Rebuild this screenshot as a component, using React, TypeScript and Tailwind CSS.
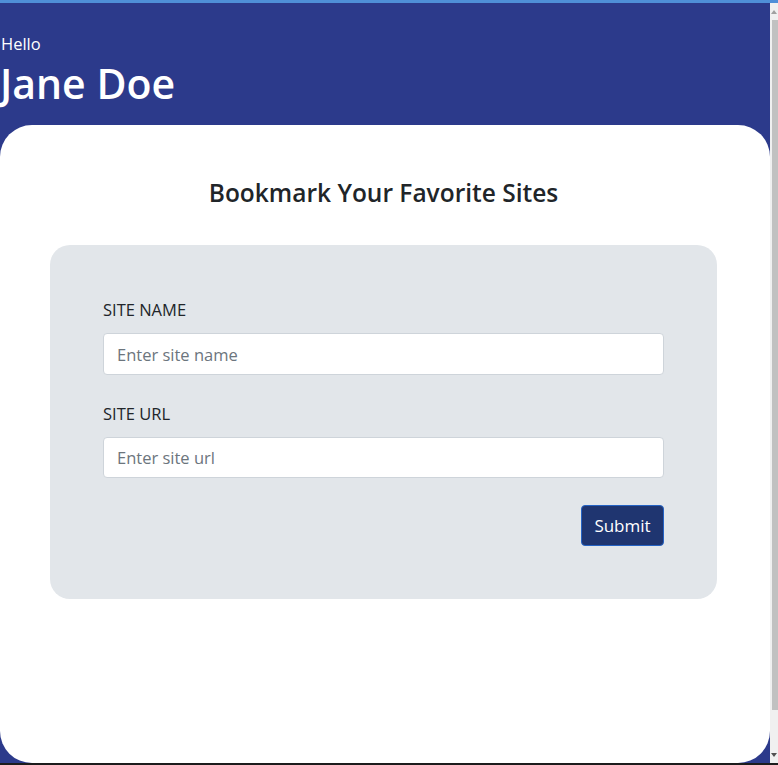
import React from 'react';

const fontStack = { fontFamily: '"Open Sans", "Noto Sans", sans-serif' };

export default function App() {
  return (
    <div className="w-[778px] h-[765px] flex flex-col bg-[#2c3a8b]" style={fontStack}>
      {/* window top edge */}
      <div className="h-[3px] bg-[#4f8fd8]" />

      <div className="flex flex-1 min-h-0">
        {/* Page */}
        <div className="flex-1 flex flex-col bg-[#2c3a8b]">
          {/* Greeting */}
          <div className="h-[122px] pt-[31px] text-white">
            <div className="pl-[1px] text-[16.5px] leading-[20px]">Hello</div>
            <div className="mt-[4px] text-[41px] leading-[50px] font-semibold">Jane Doe</div>
          </div>

          {/* Card */}
          <div className="flex-1 bg-white rounded-[32px] flex flex-col items-center pr-[3px]">
            <h1 className="mt-[52px] text-[24.5px] leading-[32px] font-semibold text-[#212529]">
              Bookmark Your Favorite Sites
            </h1>

            <form className="mt-[36px] w-[667px] bg-[#e2e6ea] rounded-[20px] px-[53px] pt-[53px] pb-[53px] flex flex-col">
              <label className="text-[16.5px] leading-[24px] text-[#212529]">SITE NAME</label>
              <input
                className="mt-[11px] h-[42px] rounded-[4px] border border-[#ced4da] bg-white px-[13px] text-[16.5px] placeholder:text-[#6c757d] outline-none"
                placeholder="Enter site name"
              />
              <label className="mt-[27px] text-[16.5px] leading-[24px] text-[#212529]">SITE URL</label>
              <input
                className="mt-[11px] h-[41px] rounded-[4px] border border-[#ced4da] bg-white px-[13px] text-[16.5px] placeholder:text-[#6c757d] outline-none"
                placeholder="Enter site url"
              />
              <div className="mt-[27px] flex justify-end">
                <button
                  type="button"
                  className="h-[41px] w-[83px] rounded-[4px] bg-[#1f3570] border border-[#2563c4] text-white text-[17px]"
                >
                  Submit
                </button>
              </div>
            </form>
          </div>
        </div>

        {/* Scrollbar */}
        <div className="w-[8px] flex flex-col bg-[#f0f0f0]">
          <div className="h-[17px] flex items-center justify-end pr-[1px]">
            <div className="w-0 h-0 border-l-[3px] border-r-[3px] border-b-[4px] border-l-transparent border-r-transparent border-b-[#a0a0a0]" />
          </div>
          <div className="flex-1 flex justify-end">
            <div className="w-[6px] h-[690px] bg-[#c1c1c1]" />
          </div>
          <div className="h-[17px] flex items-center justify-end pr-[1px]">
            <div className="w-0 h-0 border-l-[3px] border-r-[3px] border-t-[4px] border-l-transparent border-r-transparent border-t-[#505050]" />
          </div>
        </div>
      </div>

      {/* window bottom edge */}
      <div className="h-[2px] bg-[#1c1c1c]" />
    </div>
  );
}
